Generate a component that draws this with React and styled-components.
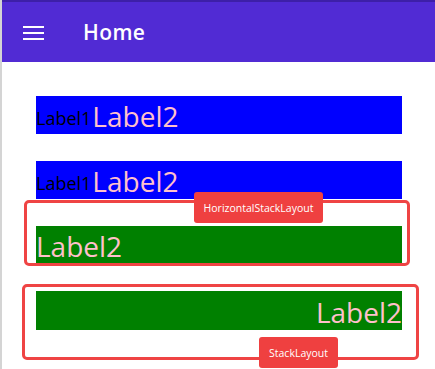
import React from 'react';
import styled, { createGlobalStyle } from 'styled-components';

const GlobalStyle = createGlobalStyle`
  html, body {
    margin: 0;
    padding: 0;
    background: #ffffff;
    font-family: "Open Sans", "Liberation Sans", sans-serif;
  }
`;

const Page = styled.div`
  position: relative;
  width: 435px;
  height: 369px;
  overflow: hidden;
  box-sizing: border-box;
  border-left: 2px solid #d4d4d4;
  background: #ffffff;
`;

const NavBar = styled.header`
  height: 62px;
  box-sizing: border-box;
  background: #512bd4;
  border-top: 2px solid #3d1fa8;
  display: flex;
  align-items: center;
  padding-left: 21px;
  gap: 39px;
`;

const Burger = styled.div`
  width: 21px;
  display: flex;
  flex-direction: column;
  gap: 4px;
  margin-top: 2px;

  span {
    display: block;
    height: 2px;
    background: #ffffff;
  }
`;

const Title = styled.h1`
  margin: 0;
  color: #ffffff;
  font-size: 21px;
  font-weight: 600;
  letter-spacing: 0.4px;
`;

const Content = styled.main`
  display: flex;
  flex-direction: column;
  gap: 27px;
  padding: 34px 33px 0 34px;
`;

const Bar = styled.div`
  height: ${(p) => p.$h || 38}px;
  display: flex;
  align-items: center;
  justify-content: ${(p) => (p.$end ? 'flex-end' : 'flex-start')};
  background: ${(p) => p.$color};
  overflow: hidden;
`;

const Small = styled.span`
  color: #000000;
  font-size: 18px;
  line-height: 1;
  margin-top: 5px;
  margin-right: 1px;
`;

const Big = styled.span`
  color: #ffc0cb;
  font-size: 28px;
  line-height: 1;
  margin-top: 2px;
`;

const Outline = styled.div`
  position: absolute;
  box-sizing: border-box;
  border: 3px solid #ef4444;
  border-radius: 5px;
`;

const Tag = styled.div`
  position: absolute;
  background: #ef4040;
  color: #ffffff;
  font-family: "Open Sans", "Liberation Sans", sans-serif;
  font-size: 10.5px;
  border-radius: 3px;
  display: flex;
  align-items: center;
  justify-content: center;
`;

export default function App() {
  return (
    <>
      <GlobalStyle />
      <Page>
        <NavBar>
          <Burger>
            <span />
            <span />
            <span />
          </Burger>
          <Title>Home</Title>
        </NavBar>
        <Content>
          <Bar $color="#0000ff">
            <Small>Label1</Small>
            <Big>Label2</Big>
          </Bar>
          <Bar $color="#0000ff">
            <Small>Label1</Small>
            <Big>Label2</Big>
          </Bar>
          <Bar $color="#008000">
            <Big>Label2</Big>
          </Bar>
          <Bar $color="#008000" $h={39} $end>
            <Big>Label2</Big>
          </Bar>
        </Content>

        <Outline style={{ left: 22, top: 200, width: 386, height: 66 }} />
        <Tag style={{ left: 192, top: 192, width: 129, height: 31 }}>HorizontalStackLayout</Tag>

        <Outline style={{ left: 20, top: 284, width: 397, height: 76 }} />
        <Tag style={{ left: 257, top: 337, width: 79, height: 31 }}>StackLayout</Tag>
      </Page>
    </>
  );
}
